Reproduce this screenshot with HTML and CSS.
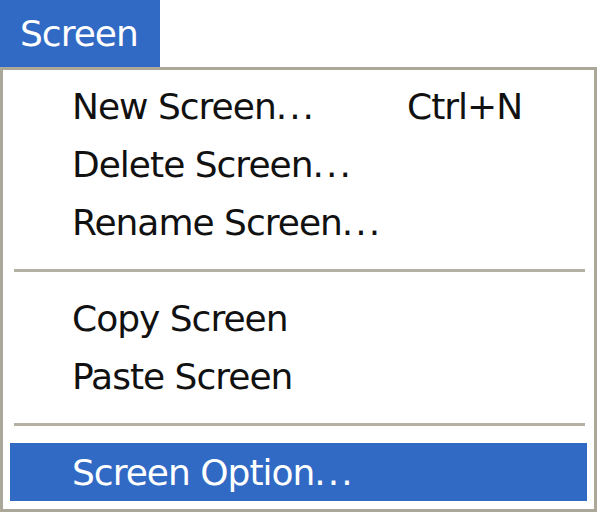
FILE: index.html
```html
<!DOCTYPE html>
<html lang="en">
<head>
    <meta charset="UTF-8">
    <meta name="viewport" content="width=device-width, initial-scale=1.0">
    <title>Screen Menu</title>
    <link rel="stylesheet" href="styles.css">
</head>
<body>
    <div class="menubar">
        <span class="menu-title">Screen</span>
    </div>
    <div class="menu">
        <div class="menu-item">
            <span class="label">New Screen<span class="dots">...</span></span>
            <span class="shortcut">Ctrl+N</span>
        </div>
        <div class="menu-item"><span class="label">Delete Screen<span class="dots">...</span></span></div>
        <div class="menu-item"><span class="label">Rename Screen<span class="dots">...</span></span></div>
        <div class="separator"></div>
        <div class="menu-item"><span class="label">Copy Screen</span></div>
        <div class="menu-item"><span class="label">Paste Screen</span></div>
        <div class="separator"></div>
        <div class="menu-item active"><span class="label">Screen Option<span class="dots">...</span></span></div>
    </div>
</body>
</html>
```

FILE: styles.css
```css
/* XP style dropdown, scaled up */
body {
    margin: 0;
    background-color: #fff;
    color: #111;
    font-family: "DejaVu Sans", Verdana, sans-serif;
    font-size: 36px;
    letter-spacing: -1px;
}
.menubar {
    display: flex;
    height: 67px;
}
.menu-title {
    width: 160px;
    padding-left: 20px;
    box-sizing: border-box;
    background-color: #316ac5;
    color: #fff;
    line-height: 67px;
}
.menu {
    width: 597px;
    box-sizing: border-box;
    border: 3px solid #aca899;
    padding: 7px 7px 8px 7px;
    background-color: #fff;
}
.menu-item {
    display: flex;
    height: 58px;
    padding: 2px 0 0 62px;
    box-sizing: border-box;
    line-height: 56px;
    white-space: nowrap;
}
.menu-item .label {
    width: 335px;
}
.dots {
    letter-spacing: 2px;
}
.menu-item.active {
    background-color: #316ac5;
    color: #fff;
}
.separator {
    height: 38px;
    display: flex;
    align-items: center;
    padding: 0 2px 0 4px;
}
.separator::before {
    content: "";
    flex: 1;
    height: 3px;
    background-color: #b4b1a3;
}
```
